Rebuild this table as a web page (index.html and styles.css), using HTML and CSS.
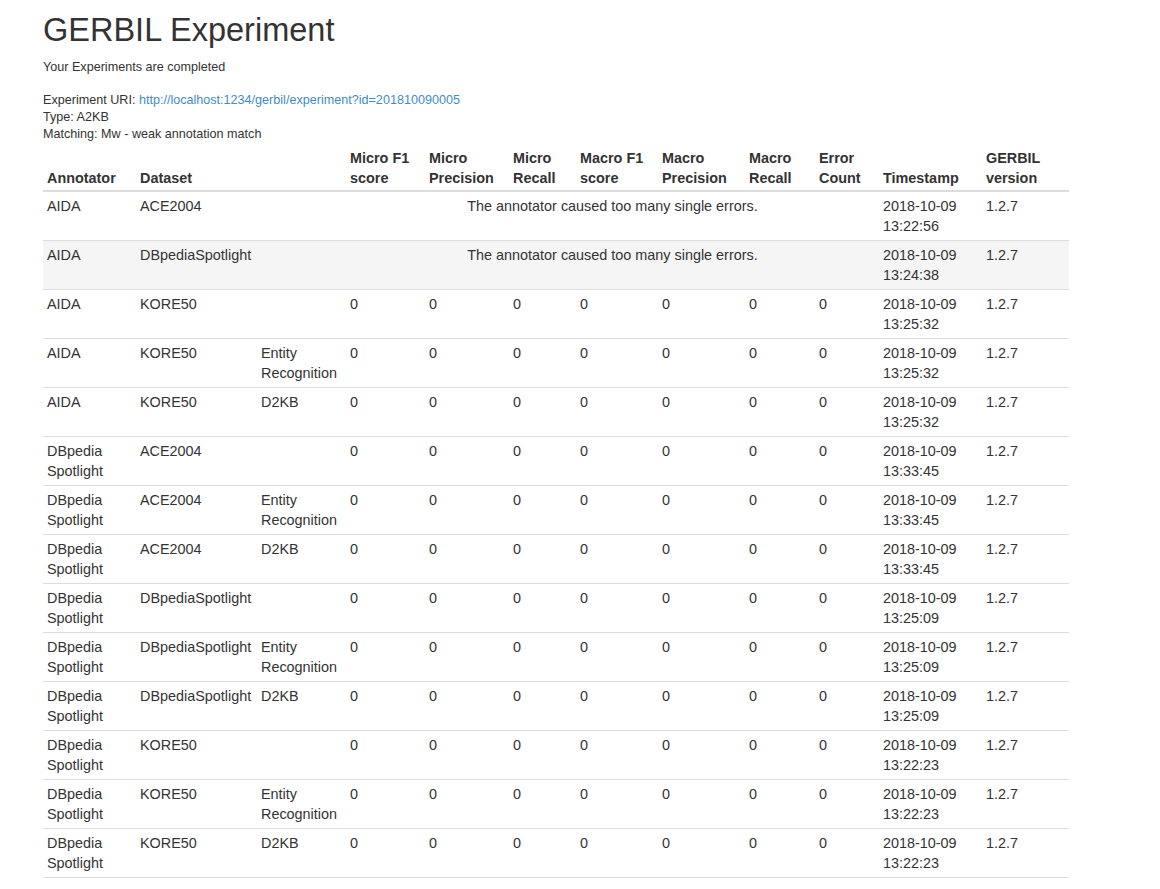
FILE: index.html
```html
<!DOCTYPE html>
<html>
<head>
<meta charset="utf-8">
<title>GERBIL Experiment</title>
<link rel="stylesheet" href="styles.css">
</head>
<body>
<div class="page">
  <h1 class="title">GERBIL Experiment</h1>
  <div class="info">
    <div>Your Experiments are completed</div>
    <div class="spacer"></div>
    <div>Experiment URI: <a class="link" href="#">http://localhost:1234/gerbil/experiment?id=201810090005</a></div>
    <div>Type: A2KB</div>
    <div>Matching: Mw - weak annotation match</div>
  </div>
  <table class="results">
    <colgroup>
      <col class="c1"><col class="c2"><col class="c3"><col class="c4"><col class="c5"><col class="c6">
      <col class="c7"><col class="c8"><col class="c9"><col class="c10"><col class="c11"><col class="c12">
    </colgroup>
    <thead>
      <tr>
        <th>Annotator</th><th>Dataset</th><th></th><th>Micro F1 score</th><th>Micro Precision</th><th>Micro Recall</th>
        <th>Macro F1 score</th><th>Macro Precision</th><th>Macro Recall</th><th>Error Count</th><th>Timestamp</th><th>GERBIL version</th>
      </tr>
    </thead>
    <tbody>
      <tr>
        <td>AIDA</td><td>ACE2004</td><td></td>
        <td colspan="7" class="msg">The annotator caused too many single errors.</td>
        <td>2018-10-09 13:22:56</td><td>1.2.7</td>
      </tr>
      <tr class="shade">
        <td>AIDA</td><td>DBpediaSpotlight</td><td></td>
        <td colspan="7" class="msg">The annotator caused too many single errors.</td>
        <td>2018-10-09 13:24:38</td><td>1.2.7</td>
      </tr>
      <tr><td>AIDA</td><td>KORE50</td><td></td><td>0</td><td>0</td><td>0</td><td>0</td><td>0</td><td>0</td><td>0</td><td>2018-10-09 13:25:32</td><td>1.2.7</td></tr>
      <tr><td>AIDA</td><td>KORE50</td><td>Entity Recognition</td><td>0</td><td>0</td><td>0</td><td>0</td><td>0</td><td>0</td><td>0</td><td>2018-10-09 13:25:32</td><td>1.2.7</td></tr>
      <tr><td>AIDA</td><td>KORE50</td><td>D2KB</td><td>0</td><td>0</td><td>0</td><td>0</td><td>0</td><td>0</td><td>0</td><td>2018-10-09 13:25:32</td><td>1.2.7</td></tr>
      <tr><td>DBpedia Spotlight</td><td>ACE2004</td><td></td><td>0</td><td>0</td><td>0</td><td>0</td><td>0</td><td>0</td><td>0</td><td>2018-10-09 13:33:45</td><td>1.2.7</td></tr>
      <tr><td>DBpedia Spotlight</td><td>ACE2004</td><td>Entity Recognition</td><td>0</td><td>0</td><td>0</td><td>0</td><td>0</td><td>0</td><td>0</td><td>2018-10-09 13:33:45</td><td>1.2.7</td></tr>
      <tr><td>DBpedia Spotlight</td><td>ACE2004</td><td>D2KB</td><td>0</td><td>0</td><td>0</td><td>0</td><td>0</td><td>0</td><td>0</td><td>2018-10-09 13:33:45</td><td>1.2.7</td></tr>
      <tr><td>DBpedia Spotlight</td><td>DBpediaSpotlight</td><td></td><td>0</td><td>0</td><td>0</td><td>0</td><td>0</td><td>0</td><td>0</td><td>2018-10-09 13:25:09</td><td>1.2.7</td></tr>
      <tr><td>DBpedia Spotlight</td><td>DBpediaSpotlight</td><td>Entity Recognition</td><td>0</td><td>0</td><td>0</td><td>0</td><td>0</td><td>0</td><td>0</td><td>2018-10-09 13:25:09</td><td>1.2.7</td></tr>
      <tr><td>DBpedia Spotlight</td><td>DBpediaSpotlight</td><td>D2KB</td><td>0</td><td>0</td><td>0</td><td>0</td><td>0</td><td>0</td><td>0</td><td>2018-10-09 13:25:09</td><td>1.2.7</td></tr>
      <tr><td>DBpedia Spotlight</td><td>KORE50</td><td></td><td>0</td><td>0</td><td>0</td><td>0</td><td>0</td><td>0</td><td>0</td><td>2018-10-09 13:22:23</td><td>1.2.7</td></tr>
      <tr><td>DBpedia Spotlight</td><td>KORE50</td><td>Entity Recognition</td><td>0</td><td>0</td><td>0</td><td>0</td><td>0</td><td>0</td><td>0</td><td>2018-10-09 13:22:23</td><td>1.2.7</td></tr>
      <tr><td>DBpedia Spotlight</td><td>KORE50</td><td>D2KB</td><td>0</td><td>0</td><td>0</td><td>0</td><td>0</td><td>0</td><td>0</td><td>2018-10-09 13:22:23</td><td>1.2.7</td></tr>
    </tbody>
  </table>
</div>
</body>
</html>
```

FILE: styles.css
```css
html, body {
  margin: 0;
  padding: 0;
  background: #fff;
}
body {
  font-family: "Liberation Sans", Arial, Helvetica, sans-serif;
  color: #333;
  font-size: 14px;
  line-height: 20px;
}
.page {
  padding: 0 0 0 43px;
}
.title {
  font-size: 32.5px;
  font-weight: 500;
  line-height: 35.6px;
  margin: 12.5px 0 11px 0;
  color: #333;
}
.info {
  font-size: 12.6px;
  line-height: 17px;
}
.spacer {
  height: 16px;
}
.link {
  color: #428bca;
  text-decoration: none;
}
.results {
  border-collapse: separate;
  border-spacing: 0;
  table-layout: fixed;
  width: 1026px;
  margin-top: 1px;
}
.results th,
.results td {
  padding: 4px;
  text-align: left;
  line-height: 20px;
  font-size: 14.4px;
}
.results th {
  font-weight: bold;
  vertical-align: bottom;
  padding-bottom: 2px;
  border-bottom: 2px solid #ddd;
}
.results td {
  vertical-align: top;
  border-top: 1px solid #ddd;
}
.results tbody tr:first-child td {
  border-top: 0;
}
.results tbody tr:last-child td {
  border-bottom: 1px solid #ddd;
}
.results td.msg {
  text-align: center;
}
.results tr.shade td {
  background: #f5f5f5;
}
.c1 { width: 93px; }
.c2 { width: 121px; }
.c3 { width: 89px; }
.c4 { width: 79px; }
.c5 { width: 84px; }
.c6 { width: 67px; }
.c7 { width: 82px; }
.c8 { width: 87px; }
.c9 { width: 70px; }
.c10 { width: 64px; }
.c11 { width: 103px; }
.c12 { width: 87px; }
```
